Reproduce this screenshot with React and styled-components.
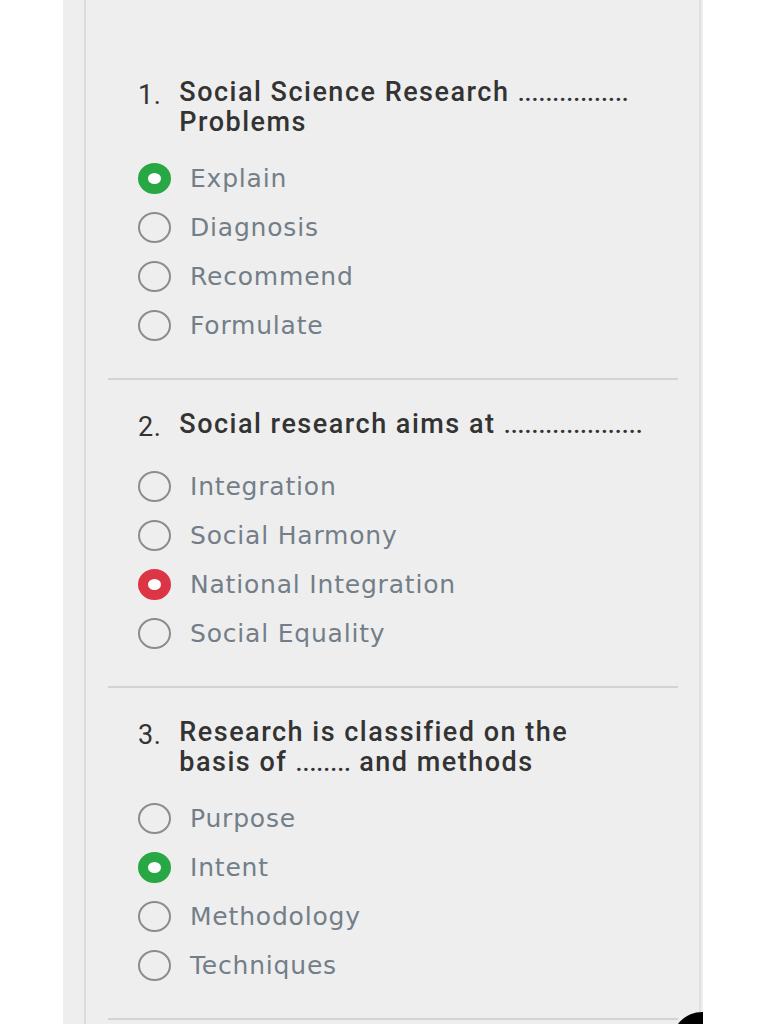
import React from "react";
import styled, { createGlobalStyle } from "styled-components";

const questions = [
	{
		no: "1.",
		lines: ["Social Science Research ................", "Problems"],
		options: ["Explain", "Diagnosis", "Recommend", "Formulate"],
		picked: 0,
		state: "right",
	},
	{
		no: "2.",
		lines: ["Social research aims at ...................."],
		options: ["Integration", "Social Harmony", "National Integration", "Social Equality"],
		picked: 2,
		state: "wrong",
	},
	{
		no: "3.",
		lines: ["Research is classified on the", "basis of ........ and methods"],
		options: ["Purpose", "Intent", "Methodology", "Techniques"],
		picked: 1,
		state: "right",
	},
];

// dotted blanks are set tighter than the words around them
const withDots = (text) =>
	text.split(/(\.{4,})/).map((part, i) =>
		/^\.{4,}$/.test(part) ? <Dots key={i}>{part}</Dots> : part
	);

const App = () => {
	return (
		<>
			<GlobalStyle />
			<Panel>
				<Inner>
					{questions.map((q) => (
						<Section key={q.no}>
							<Title>
								<Num>{q.no}</Num>
								<Text>
									{q.lines.map((line) => (
										<Line key={line}>{withDots(line)}</Line>
									))}
								</Text>
							</Title>
							<Options>
								{q.options.map((opt, i) => (
									<Option key={opt}>
										<Radio $state={i === q.picked ? q.state : null} />
										<Label>{opt}</Label>
									</Option>
								))}
							</Options>
						</Section>
					))}
				</Inner>
				<Fab />
			</Panel>
		</>
	);
};

export default App;

const GlobalStyle = createGlobalStyle`
	body {
		margin: 0;
		background: #ffffff;
	}
`;

const Panel = styled.div`
	position: relative;
	overflow: hidden;
	box-sizing: border-box;
	margin-left: 63px;
	width: 640px;
	min-height: 100vh;
	padding: 0 2px 0 21px;
	background: #eeeeee;
	display: flex;
`;

const Inner = styled.div`
	flex: 1;
	border-left: 2px solid #dadada;
	border-right: 2px solid #e0e0e0;
	padding-top: 48px;
`;

const Section = styled.div`
	margin: 0 21px 0 22px;
	padding: 29px 0 28px 30px;
	border-bottom: 2px solid #d3d3d3;
`;

const Title = styled.div`
	display: flex;
	gap: 18px;
	color: #333333;
	font-family: Roboto, "Liberation Sans", sans-serif;
	font-size: 27px;
	margin-bottom: 17px;
`;

const Num = styled.span`
	line-height: 36px;
	font-weight: 400;
	letter-spacing: 0.5px;
`;

const Text = styled.div`
	display: flex;
	flex-direction: column;
	font-weight: 500;
	letter-spacing: 1.5px;
`;

const Line = styled.span`
	line-height: 30px;
	height: 30px;
	white-space: nowrap;
`;

const Dots = styled.span`
	font-size: 25px;
	letter-spacing: 0;
`;

const Options = styled.div`
	display: flex;
	flex-direction: column;
`;

const Option = styled.div`
	display: flex;
	align-items: center;
	gap: 19px;
	height: 49px;
`;

const Radio = styled.span`
	box-sizing: border-box;
	width: 33px;
	height: 31px;
	border-radius: 50%;
	border: ${(p) =>
		p.$state === "right"
			? "10px solid #28a745"
			: p.$state === "wrong"
			? "10px solid #dc3545"
			: "2px solid #8c8c8c"};
	background: ${(p) => (p.$state ? "#ffffff" : "transparent")};
`;

const Label = styled.span`
	font-family: "DejaVu Sans", "Open Sans", sans-serif;
	font-size: 25px;
	letter-spacing: 0.8px;
	color: #737e89;
`;

const Fab = styled.div`
	position: absolute;
	right: -29px;
	bottom: -48px;
	width: 60px;
	height: 60px;
	border-radius: 50%;
	background: #000000;
`;
